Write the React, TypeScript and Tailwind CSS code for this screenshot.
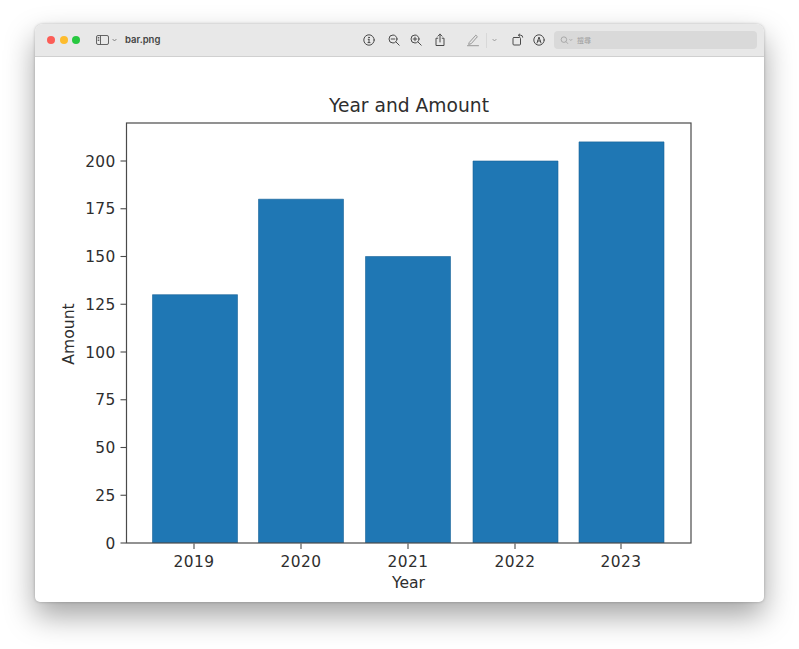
const bars = [
  { year: '2019', value: 130, x: 152.5, cx: 194 },
  { year: '2020', value: 180, x: 258.5, cx: 301 },
  { year: '2021', value: 150, x: 365.5, cx: 408 },
  { year: '2022', value: 200, x: 473, cx: 515 },
  { year: '2023', value: 210, x: 579, cx: 621 },
]

const yTicks = [0, 25, 50, 75, 100, 125, 150, 175, 200]
const y0 = 543
const scale = 1.91
const ink = '#2e2e2e'

function ToolIcon({ children, className }: { children: React.ReactNode; className?: string }) {
  return (
    <svg
      viewBox="0 0 14 14"
      fill="none"
      stroke="#4a4a4a"
      strokeWidth="1"
      strokeLinecap="round"
      strokeLinejoin="round"
      className={`w-3.5 h-3.5 shrink-0 ${className ?? ''}`}
    >
      {children}
    </svg>
  )
}

function Toolbar() {
  return (
    <div className="flex items-center h-[33px] bg-[#e8e8e8] border-b border-[#d0d0d0] rounded-t-[8px] pl-3 pr-[7px]">
      <div className="flex items-center gap-[4.5px] w-[36px] shrink-0">
        <span className="w-2 h-2 rounded-full bg-[#fc5d57]" />
        <span className="w-2 h-2 rounded-full bg-[#fdbc2e]" />
        <span className="w-2 h-2 rounded-full bg-[#27c840]" />
      </div>
      <svg viewBox="0 0 13 10" fill="none" stroke="#555" strokeWidth="0.9" className="w-[13px] h-[10px] ml-[13px] shrink-0">
        <rect x="0.5" y="0.5" width="12" height="9" rx="1.5" />
        <path d="M4.5 0.5v9M1.7 2.5h1.6M1.7 4h1.6M1.7 5.5h1.6" />
      </svg>
      <svg viewBox="0 0 6 4" fill="none" stroke="#666" strokeWidth="0.9" className="w-[5px] h-[4px] ml-[3px] shrink-0">
        <path d="M0.7 0.8L3 3.2L5.3 0.8" />
      </svg>
      <span className="ml-2 w-[237px] shrink-0 text-[9.5px] font-semibold text-[#444] font-['Inter',sans-serif]">bar.png</span>

      <ToolIcon className="ml-0">
        <circle cx="7" cy="7" r="5.2" />
        <path d="M7 6.3v3.2M6 9.6h2M6.2 6.3H7" />
        <circle cx="7" cy="4.4" r="0.4" fill="#4a4a4a" />
      </ToolIcon>
      <ToolIcon className="ml-[11px]">
        <circle cx="6" cy="6" r="4" />
        <path d="M9 9l3.2 3.2M4.2 6h3.6" />
      </ToolIcon>
      <ToolIcon className="ml-2">
        <circle cx="6" cy="6" r="4" />
        <path d="M9 9l3.2 3.2M4.2 6h3.6M6 4.2v3.6" />
      </ToolIcon>
      <ToolIcon className="ml-2.5">
        <path d="M4.8 5.2H3v7.3h8V5.2H9.2M7 9V1.2M5 3.1l2-2 2 2" />
      </ToolIcon>
      <ToolIcon className="ml-[19px] opacity-50">
        <path d="M3.5 9.2l6.3-7 1.6 1.5-6.2 7-2.2.6zM1.5 12.7h11" />
      </ToolIcon>
      <span className="ml-[6px] w-px h-[15px] bg-[#d8d8d8] shrink-0" />
      <svg viewBox="0 0 6 4" fill="none" stroke="#888" strokeWidth="0.9" className="w-[5px] h-[4px] ml-[5px] shrink-0">
        <path d="M0.7 0.8L3 3.2L5.3 0.8" />
      </svg>
      <ToolIcon className="ml-[14px]">
        <rect x="2" y="4.5" width="7.5" height="7.5" rx="1" />
        <path d="M7.5 2.2h2.2a2 2 0 0 1 2 2M8.8 1L7.5 2.2l1.3 1.2" />
      </ToolIcon>
      <ToolIcon className="ml-[7px]">
        <circle cx="7" cy="7" r="5.2" />
        <path d="M5 10l2-6 2 6M5.8 8h2.4" />
      </ToolIcon>
      <div className="flex items-center ml-[8px] flex-1 h-[18px] rounded-[4px] bg-[#d9d9d9] pl-[6px]">
        <svg viewBox="0 0 15 10" fill="none" stroke="#9a9a9a" strokeWidth="0.9" className="w-[13px] h-[9px] shrink-0">
          <circle cx="4.5" cy="4" r="3.2" />
          <path d="M7 6.4l2.2 2.4M11 3.5l1.5 1.5 1.5-1.5" />
        </svg>
        <span className="ml-[4px] text-[7px] text-[#a0a0a0] font-['Noto_Sans_CJK_TC',sans-serif]">搜尋</span>
      </div>
    </div>
  )
}

function Chart() {
  return (
    <svg
      viewBox="35 57 729 545"
      className="block w-[729px] h-[545px] font-['DejaVu_Sans',sans-serif]"
      fill={ink}
    >
      <text x="409" y="111.5" textAnchor="middle" fontSize="18.7">Year and Amount</text>

      {bars.map(b => (
        <rect
          key={b.year}
          x={b.x}
          y={y0 - b.value * scale}
          width="85"
          height={b.value * scale}
          fill="#1f77b4"
        />
      ))}
      {bars.map(b => (
        <path
          key={b.year}
          d={`M${b.x} ${y0}V${y0 - b.value * scale}h85V${y0}`}
          fill="none"
          stroke="#1a6397"
          strokeWidth="0.6"
        />
      ))}

      <rect x="126.5" y="123" width="564.5" height="420" fill="none" stroke="#4a4a4a" strokeWidth="1.2" />

      {yTicks.map(t => {
        const y = y0 - t * scale
        return (
          <g key={t}>
            <path d={`M120.5 ${y}H126`} stroke="#4a4a4a" strokeWidth="1.1" />
            <text x="115.5" y={y + 5.6} textAnchor="end" fontSize="15.4" letterSpacing="0.3">{t}</text>
          </g>
        )
      })}
      {bars.map(b => (
        <g key={b.year}>
          <path d={`M${b.cx} 543.5V549`} stroke="#4a4a4a" strokeWidth="1.1" />
          <text x={b.cx} y="566.5" textAnchor="middle" fontSize="15.4" letterSpacing="0.4">{b.year}</text>
        </g>
      ))}

      <text x="408.5" y="587.5" textAnchor="middle" fontSize="15.6">Year</text>
      <text transform="translate(74 334) rotate(-90)" textAnchor="middle" fontSize="15.6">Amount</text>
    </svg>
  )
}

export default function App() {
  return (
    <div className="w-[799px] h-[649px] overflow-hidden bg-white pt-6 pl-[35px]">
      <div className="w-[729px] h-[578px] rounded-t-[8px] rounded-b-[5px] bg-white shadow-[0_14px_30px_rgba(0,0,0,0.36),0_0_3px_rgba(0,0,0,0.25)]">
        <Toolbar />
        <Chart />
      </div>
    </div>
  )
}
